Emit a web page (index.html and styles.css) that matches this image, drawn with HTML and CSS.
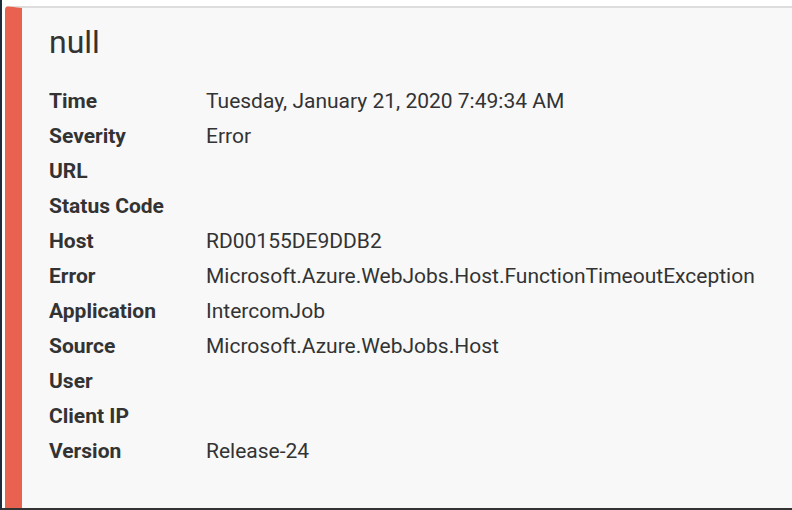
FILE: index.html
```html
<!DOCTYPE html>
<html lang="en">
<head>
    <meta charset="UTF-8">
    <title>Error detail</title>
    <link rel="stylesheet" href="styles.css">
</head>
<body>
    <div class="page">
        <div class="card">
            <h1 class="card-title">null</h1>
            <div class="fields">
                <div class="field"><span class="field-name">Time</span><span class="field-value">Tuesday, January 21, 2020 7:49:34 AM</span></div>
                <div class="field"><span class="field-name">Severity</span><span class="field-value">Error</span></div>
                <div class="field"><span class="field-name">URL</span><span class="field-value"></span></div>
                <div class="field"><span class="field-name">Status Code</span><span class="field-value"></span></div>
                <div class="field"><span class="field-name">Host</span><span class="field-value">RD00155DE9DDB2</span></div>
                <div class="field"><span class="field-name">Error</span><span class="field-value">Microsoft.Azure.WebJobs.Host.FunctionTimeoutException</span></div>
                <div class="field"><span class="field-name">Application</span><span class="field-value">IntercomJob</span></div>
                <div class="field"><span class="field-name">Source</span><span class="field-value">Microsoft.Azure.WebJobs.Host</span></div>
                <div class="field"><span class="field-name">User</span><span class="field-value"></span></div>
                <div class="field"><span class="field-name">Client IP</span><span class="field-value"></span></div>
                <div class="field"><span class="field-name">Version</span><span class="field-value">Release-24</span></div>
            </div>
        </div>
    </div>
</body>
</html>
```

FILE: styles.css
```css
/* detalle de error */
html, body {
    margin: 0;
    height: 100%;
}

body {
    font-family: Roboto, sans-serif;
    background-color: #fff;
    color: #333;
    overflow: hidden;
}

.page {
    box-sizing: border-box;
    height: 510px;
    padding: 6px 0 0 3px;
    border-left: 2px solid #1d2b3b;
    border-bottom: 2px solid #333;
    display: flex;
}

.card {
    flex: 1;
    background-color: #f8f8f8;
    border-top: 2px solid #ddd;
    border-left: 17px solid #e9624f;
    border-top-left-radius: 4px;
    padding: 15px 0 0 27px;
}

.card-title {
    margin: 0 0 23px;
    font-size: 32px;
    font-weight: 400;
    line-height: normal;
}

.fields {
    display: flex;
    flex-direction: column;
}

.field {
    display: flex;
    height: 35px;
    line-height: 35px;
    font-size: 21px;
}

.field-name {
    width: 157px;
    flex-shrink: 0;
    font-weight: 700;
}

.field-value {
    white-space: nowrap;
}
```
